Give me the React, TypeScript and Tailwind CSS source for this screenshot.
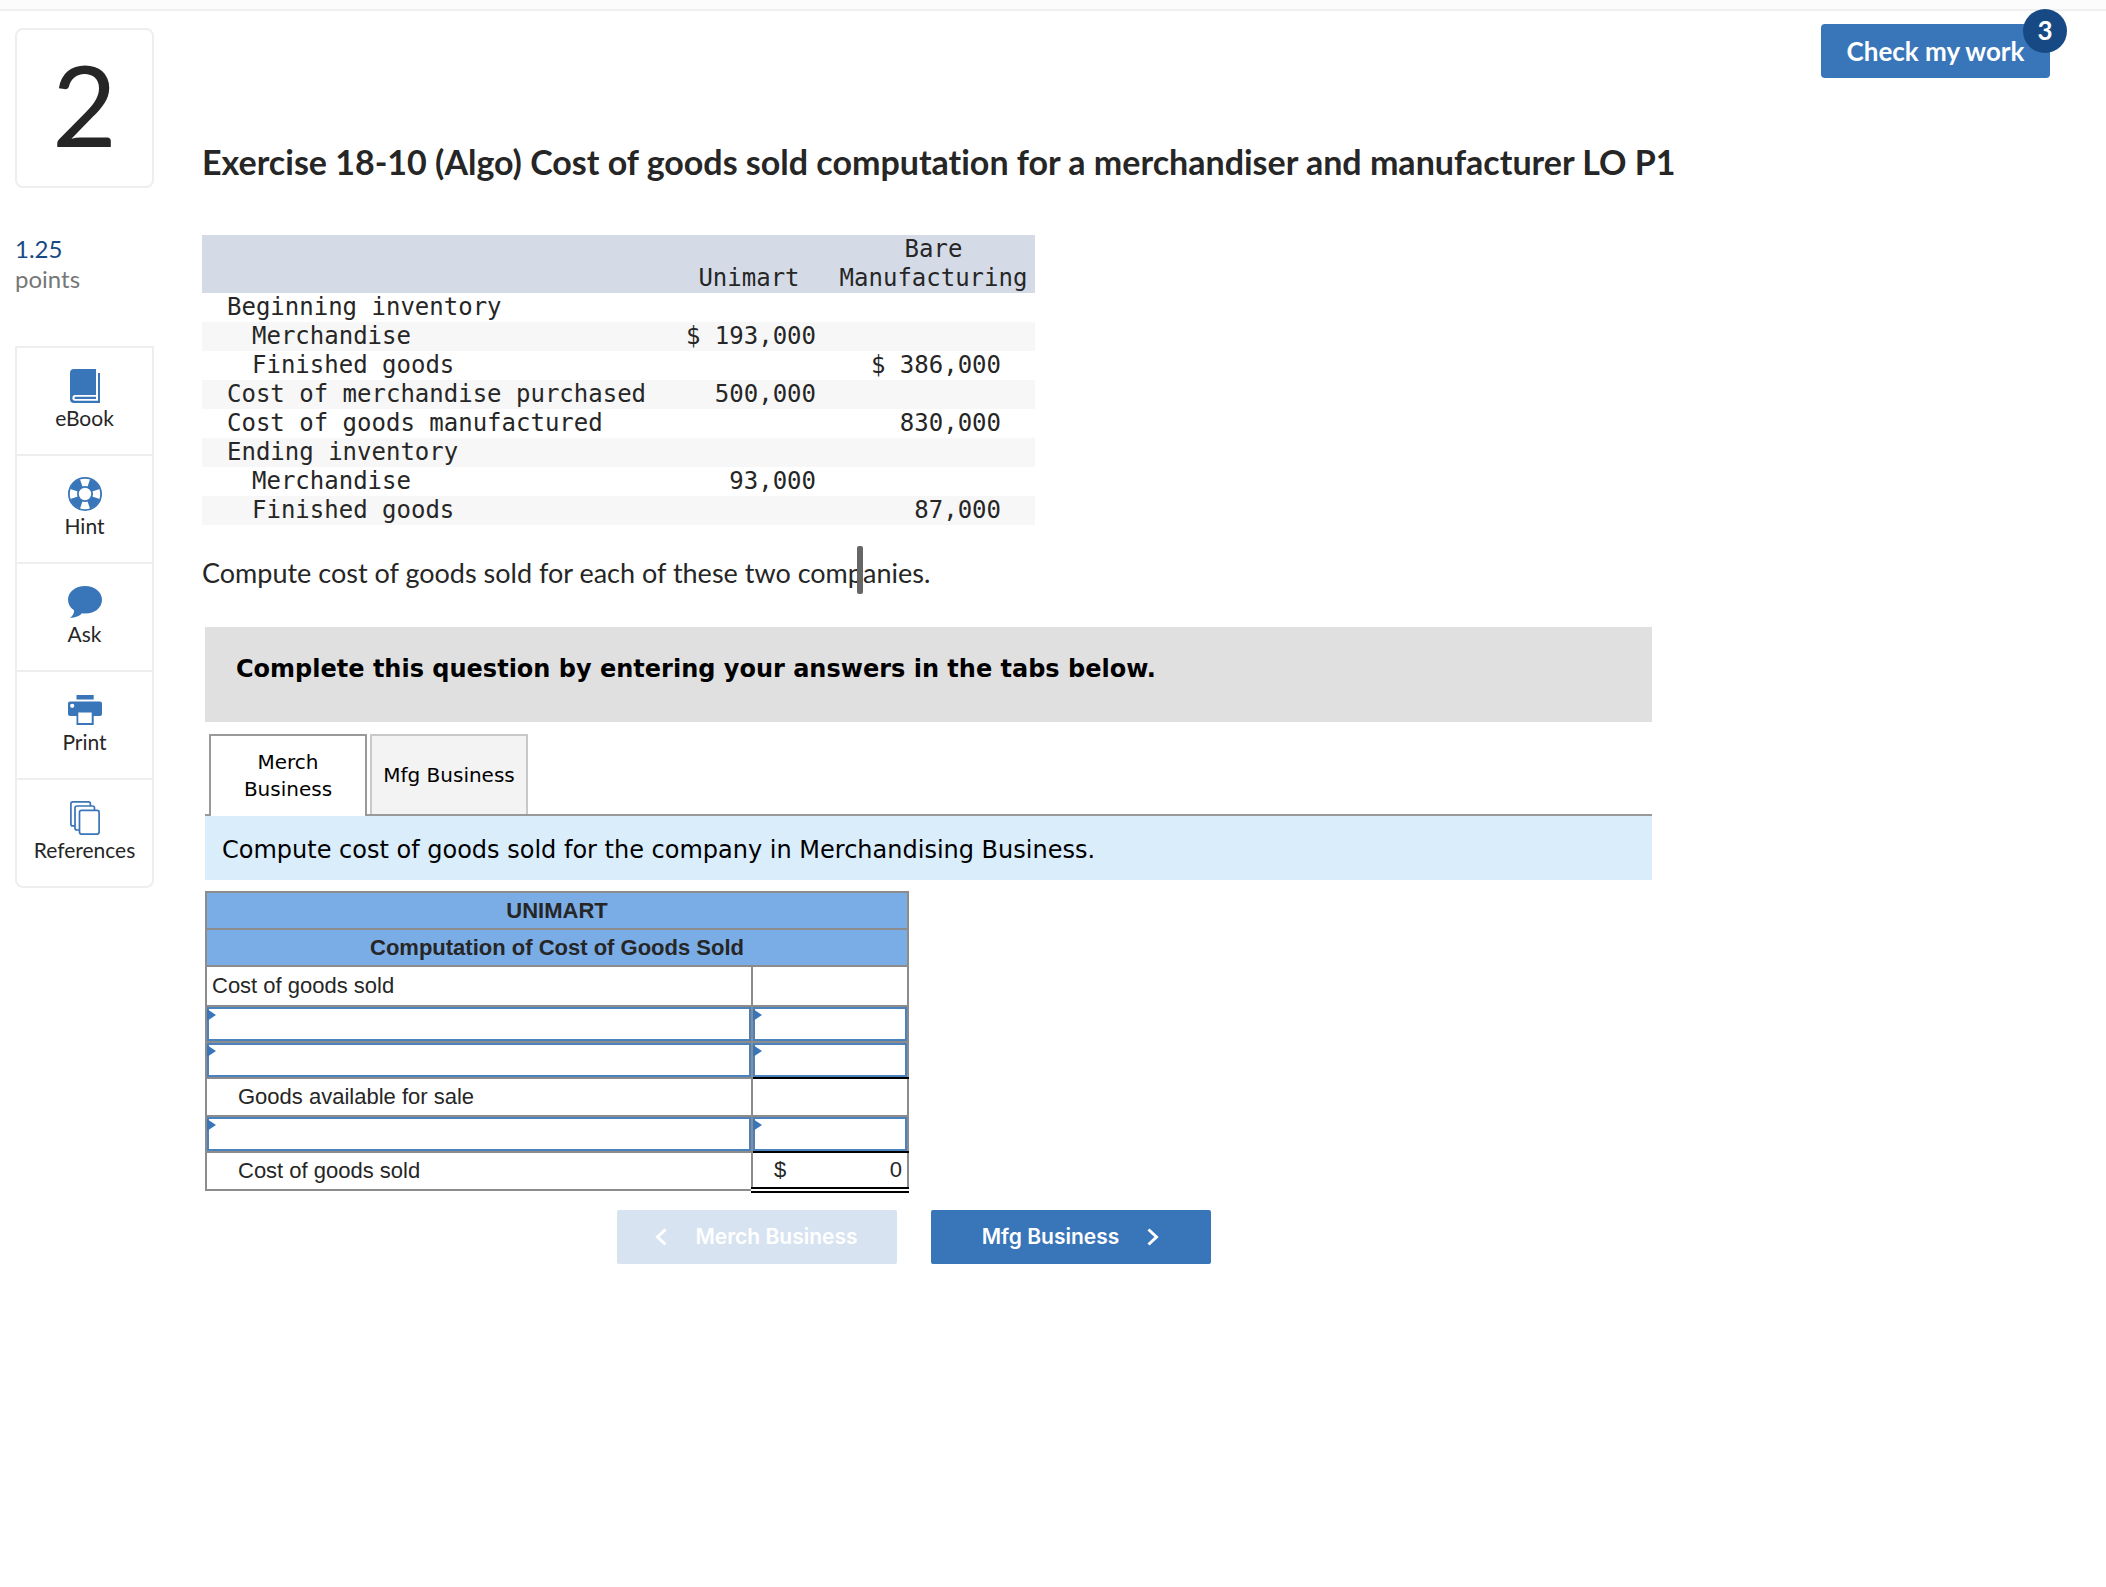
import { clsx } from "clsx";
import { useState } from "react";
import type { ReactNode } from "react";

const BookIcon = () => (
  <svg viewBox="0 0 30 34" className="h-[34px] w-[30px]" fill="currentColor">
    <path
      fillRule="evenodd"
      d="M4 0H26V26H5Q2.400 26.300 2.400 29T5 31.800H28V4H30V34H4Q0 34 0 30V4Q0 0 4 0ZM5 27.700H26V30H5Q3.800 28.900 5 27.700Z"
    />
  </svg>
);

const LifeRingIcon = () => (
  <svg viewBox="0 0 34 34" className="size-[34px]" fill="none" stroke="currentColor">
    <circle cx="17" cy="17" r="16.1" strokeWidth="1.8" />
    <circle cx="17" cy="17" r="7.100" strokeWidth="1.8" />
    <circle
      cx="17"
      cy="17"
      r="11.5"
      strokeWidth="8"
      pathLength="360"
      strokeDasharray="52 38"
      strokeDashoffset="-19"
    />
  </svg>
);

const CommentIcon = () => (
  <svg viewBox="0 0 34 34" className="size-[34px]" fill="currentColor">
    <path d="M17 1C7.500 1 0 7 0 14.700C0 19 2.300 22.700 6 25.200C6.500 28 4.800 30.500 2 33C7.500 33 11.500 31 14 28.300C25 30 34 23.500 34 14.700C34 7 26.500 1 17 1Z" />
  </svg>
);

const PrintIcon = () => (
  <svg viewBox="0 0 34 30" className="h-[30px] w-[34px]" fill="currentColor">
    <path d="M8.500 0H25.700V4.500H8.500Z" />
    <path
      fillRule="evenodd"
      d="M2 6.500H32Q34 6.500 34 8.500V19Q34 21 32 21H25.700V30H8.500V21H2Q0 21 0 19V8.500Q0 6.500 2 6.500ZM4.200 8.700A2 2 0 1 0 4.200 12.900A2 2 0 1 0 4.200 8.700ZM10.300 17.500V28H23.700V17.500Z"
    />
  </svg>
);

const CopiesIcon = () => (
  <svg
    viewBox="0 0 30 34"
    className="h-[34px] w-[30px]"
    fill="white"
    stroke="currentColor"
    strokeWidth="1.7">
    <rect x="0.9" y="0.9" width="19.500" height="24" rx="2" />
    <rect x="5" y="5" width="19.500" height="24" rx="2" />
    <rect x="9.500" y="9.300" width="19.600" height="23.800" rx="2" />
  </svg>
);

const Chevron = ({ flip }: { flip?: boolean }) => (
  <svg
    viewBox="0 0 12 18"
    className={clsx("h-[18px] w-3", flip && "-scale-x-100")}
    fill="none"
    stroke="currentColor"
    strokeWidth="3">
    <path d="M1.500 1.500L9.500 9L1.500 16.500" />
  </svg>
);

const tools = [
  { label: "eBook", icon: <BookIcon /> },
  { label: "Hint", icon: <LifeRingIcon /> },
  { label: "Ask", icon: <CommentIcon /> },
  { label: "Print", icon: <PrintIcon /> },
  { label: "References", icon: <CopiesIcon /> },
];

const inventoryRows = [
  { label: "Beginning inventory" },
  { label: "Merchandise", indent: true, unimart: "$ 193,000" },
  { label: "Finished goods", indent: true, bare: "$ 386,000" },
  { label: "Cost of merchandise purchased", unimart: "500,000" },
  { label: "Cost of goods manufactured", bare: "830,000" },
  { label: "Ending inventory" },
  { label: "Merchandise", indent: true, unimart: "93,000" },
  { label: "Finished goods", indent: true, bare: "87,000" },
];

const Sidebar = () => (
  <aside className="flex w-[139px] shrink-0 flex-col">
    <div className="flex h-40 items-center justify-center rounded-lg border-2 border-[#eeeeee] pb-2 text-[112px] leading-none text-[#262626]">
      2
    </div>
    <div className="mt-[46px] text-2xl leading-[30px]">
      <p className="text-[#174a84]">1.25</p>
      <p className="text-[#777777]">points</p>
    </div>
    <nav className="mt-[52px] divide-y-2 divide-[#eeeeee] rounded-b-lg border-2 border-[#eeeeee]">
      {tools.map((tool) => (
        <button
          key={tool.label}
          type="button"
          className="flex h-[108px] w-full flex-col items-center pt-5 text-[21px] leading-6 text-[#262626] last:h-[106px]">
          <span className="flex h-9 items-center text-[#3875b9]">{tool.icon}</span>
          <span className="mt-0.5">{tool.label}</span>
        </button>
      ))}
    </nav>
  </aside>
);

const InventoryTable = () => (
  <table className="w-[833px] table-fixed font-['DejaVu_Sans_Mono',monospace] text-2xl leading-[29px] text-[#262626]">
    <colgroup>
      <col className="w-[464px]" />
      <col className="w-[166px]" />
      <col />
    </colgroup>
    <thead>
      <tr className="bg-[#d5dbe6] align-bottom">
        <td />
        <th scope="col" className="font-normal">
          Unimart
        </th>
        <th scope="col" className="font-normal">
          Bare
          <br />
          Manufacturing
        </th>
      </tr>
    </thead>
    <tbody>
      {inventoryRows.map((row, index) => (
        <tr key={index} className="h-[29px] even:bg-[#f7f7f7]">
          <th
            scope="row"
            className={clsx(
              "text-left font-normal whitespace-nowrap",
              row.indent ? "pl-[50px]" : "pl-[25px]",
            )}>
            {row.label}
          </th>
          <td className="pr-4 text-right">{row.unimart}</td>
          <td className="pr-[34px] text-right">{row.bare}</td>
        </tr>
      ))}
    </tbody>
  </table>
);

const AnswerCell = ({ label }: { label: string }) => {
  const [value, setValue] = useState("");
  return (
    <div className="relative">
      <input
        aria-label={label}
        value={value}
        onChange={(e) => setValue(e.target.value)}
        className="block h-[34px] w-full border-2 border-[#4a82c0] bg-white px-3 outline-none"
      />
      <svg
        viewBox="0 0 9 12"
        className="absolute top-0.5 left-0 h-3 w-[9px] text-[#3875b9]"
        fill="currentColor">
        <path d="M0 0L9 6L0 12Z" />
      </svg>
    </div>
  );
};

const border = "border-2 border-[#8c8c8c]";

const AnswerRow = ({ name, total }: { name: string; total?: boolean }) => (
  <tr>
    <td className={clsx(border, "p-0")}>
      <AnswerCell label={`${name} description`} />
    </td>
    <td className={clsx(border, "p-0", total && "border-b-black")}>
      <AnswerCell label={`${name} amount`} />
    </td>
  </tr>
);

const TextRow = ({
  children,
  indent,
  amount,
}: {
  children: ReactNode;
  indent?: boolean;
  amount?: string;
}) => (
  <tr className={indent ? "h-[38px]" : "h-10"}>
    <td className={clsx(border, indent ? "pl-[31px]" : "pl-[5px]")}>{children}</td>
    <td
      className={clsx(
        "border-2 border-x-[#8c8c8c] px-[5px]",
        amount ? "border-y-black" : "border-y-[#8c8c8c]",
        indent && "border-t-black",
        amount && "border-b-[6px] [border-bottom-style:double]",
      )}>
      {amount && (
        <div className="flex justify-between pl-4">
          <span>$</span>
          <span>{amount}</span>
        </div>
      )}
    </td>
  </tr>
);

const ComputationTable = () => (
  <table className="mt-[11px] w-[704px] table-fixed border-collapse font-['Liberation_Sans',Arial,sans-serif] text-[22px] leading-7 text-[#262626]">
    <colgroup>
      <col className="w-[546px]" />
      <col />
    </colgroup>
    <thead className="bg-[#7aace5]">
      <tr className="h-[37px]">
        <th colSpan={2} className={border}>
          UNIMART
        </th>
      </tr>
      <tr className="h-[37px]">
        <th colSpan={2} className={border}>
          Computation of Cost of Goods Sold
        </th>
      </tr>
    </thead>
    <tbody>
      <TextRow>Cost of goods sold</TextRow>
      <AnswerRow name="First item" />
      <AnswerRow name="Second item" total />
      <TextRow indent>Goods available for sale</TextRow>
      <AnswerRow name="Third item" total />
      <TextRow indent amount="0">
        Cost of goods sold
      </TextRow>
    </tbody>
  </table>
);

const tabs = ["Merch Business", "Mfg Business"];

export default function App() {
  const [activeTab, setActiveTab] = useState(tabs[0]);

  return (
    <div className="min-h-screen bg-white font-['Lato',sans-serif] text-[#262626] [font-variant-ligatures:none]">
      <div className="h-[11px] border-b-2 border-[#f0f0f0] bg-[#fcfcfc]" />

      <div className="flex gap-12 pt-[17px] pl-[15px]">
        <Sidebar />

        <main className="min-w-0 flex-1">
          {/* Check my work */}
          <div className="-mt-1 flex justify-end pr-14">
            <button
              type="button"
              className="relative h-[54px] w-[229px] rounded-sm bg-[#3875b9] text-[26px] font-bold text-white">
              Check my work
              <span className="absolute -top-[15px] -right-[17px] flex size-11 items-center justify-center rounded-full bg-[#174a84] pb-0.5 text-[26px]">
                3
              </span>
            </button>
          </div>

          <h1 className="mt-16 text-[34px] leading-10 font-bold">
            Exercise 18-10 (Algo) Cost of goods sold computation for a merchandiser
            and manufacturer LO P1
          </h1>

          <div className="mt-[53px]">
            <InventoryTable />
          </div>

          <p className="mt-[30px] text-[27px] leading-9">
            Compute cost of goods sold for each of these two com
            <span className="relative">
              p
              <span className="absolute -top-2.5 right-0 h-12 w-1.5 rounded-xs bg-[#666666]" />
            </span>
            anies.
          </p>

          {/* Answer area */}
          <section className="mt-9 mr-[454px] pl-[3px] font-['DejaVu_Sans',Verdana,sans-serif] text-black">
            <div className="h-[95px] bg-[#e0e0e0] pt-[26px] pl-[31px] text-2xl leading-8 font-bold">
              Complete this question by entering your answers in the tabs below.
            </div>

            <div role="tablist" className="mt-3 flex gap-[3px] border-b-2 border-[#999999] pl-1">
              {tabs.map((tab) => (
                <button
                  key={tab}
                  type="button"
                  role="tab"
                  aria-selected={tab === activeTab}
                  onClick={() => setActiveTab(tab)}
                  className={clsx(
                    "w-[158px] border-2 border-b-0 px-2 text-xl leading-[27px]",
                    tab === activeTab
                      ? "-mb-0.5 h-[82px] border-[#999999] bg-white"
                      : "h-20 border-[#c8c8c8] bg-[#f3f3f3]",
                  )}>
                  {tab}
                </button>
              ))}
            </div>

            <div className="h-16 bg-[#daedfb] pt-[18px] pl-[17px] text-2xl leading-8">
              Compute cost of goods sold for the company in Merchandising Business.
            </div>

            <ComputationTable />

            <div className="mt-[17px] flex justify-center gap-[34px] pr-[30px] font-['Inter',sans-serif] text-[21px] font-semibold text-white">
              <button
                type="button"
                disabled
                className="flex h-[54px] w-[280px] items-center justify-center gap-7 rounded-xs bg-[#d7e3f1]">
                <Chevron flip />
                Merch Business
              </button>
              <button
                type="button"
                onClick={() => setActiveTab(tabs[1])}
                className="flex h-[54px] w-[280px] items-center justify-center gap-7 rounded-xs bg-[#3875b9]">
                Mfg Business
                <Chevron />
              </button>
            </div>
          </section>
        </main>
      </div>
    </div>
  );
}
